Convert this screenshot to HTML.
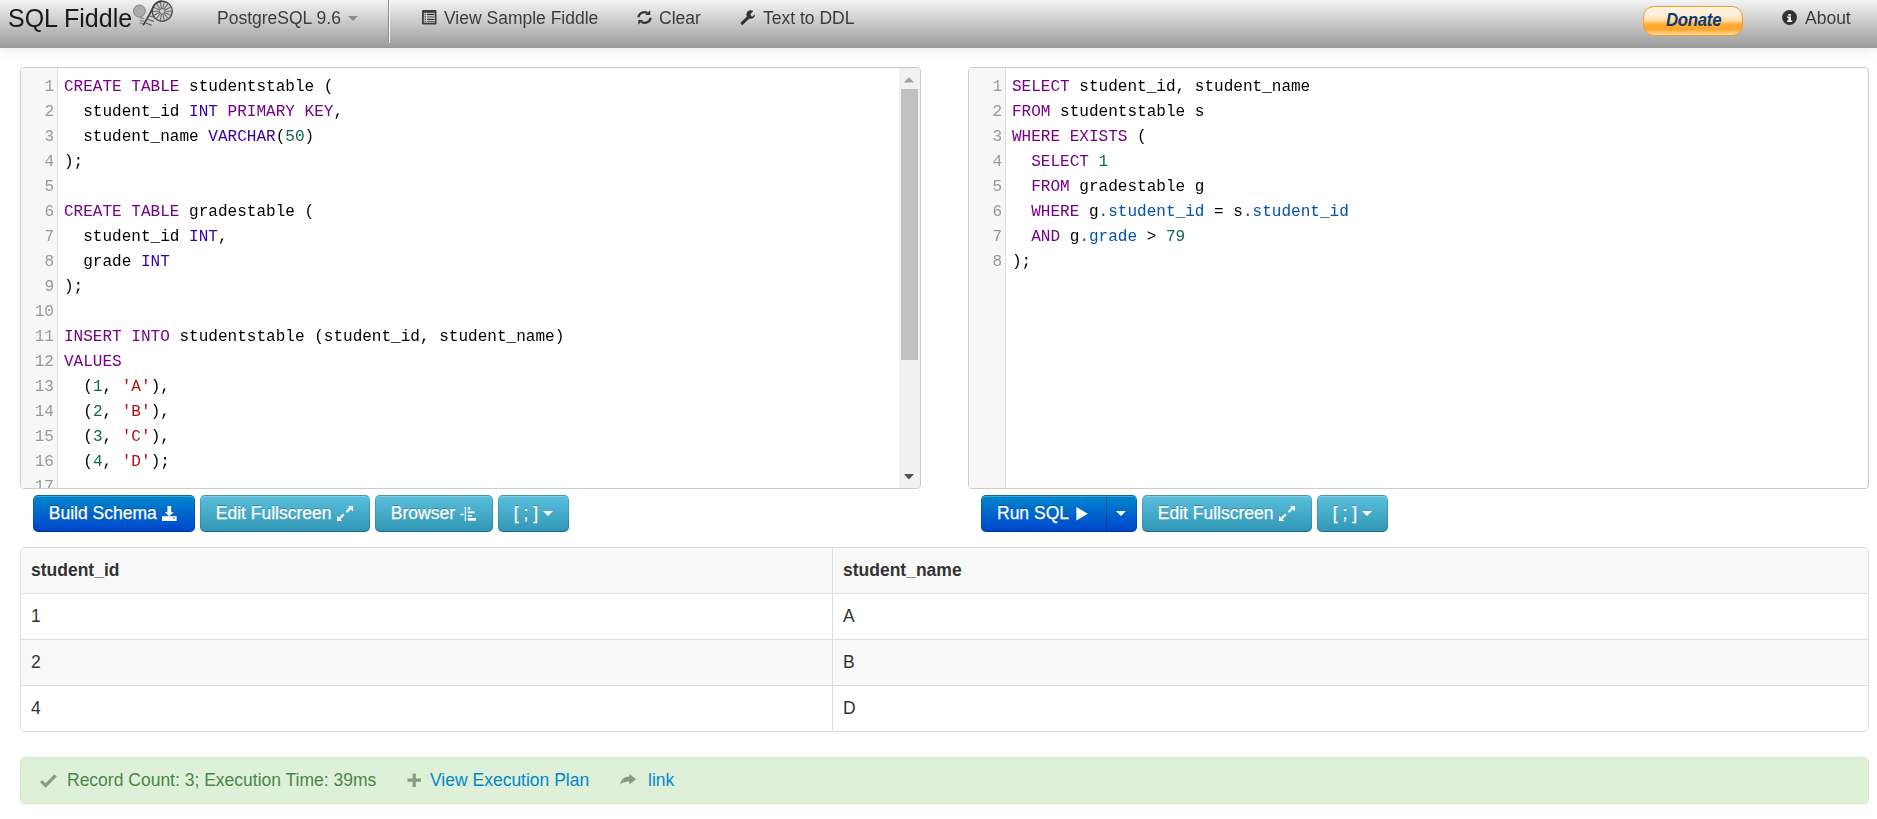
<!DOCTYPE html>
<html><head><meta charset="utf-8">
<style>
*{box-sizing:border-box}
html,body{margin:0;padding:0;width:1877px;height:819px;overflow:hidden;background:#fff;font-family:"Liberation Sans",sans-serif;color:#333}
.abs{position:absolute}
svg{position:absolute;overflow:visible}
#nav{position:absolute;left:0;top:0;width:1877px;height:48px;background:linear-gradient(#f2f2f2 2%,#9b9b9b 98%);box-shadow:0 2px 12px rgba(0,0,0,.09)}
.t{position:absolute;font-size:17.5px;line-height:20px;white-space:nowrap}
.navt{color:#3d3d3d;will-change:transform}
#brand{position:absolute;left:8px;top:3.6px;font-size:25px;line-height:29px;color:#1a1a1a;white-space:nowrap;will-change:transform}
.panel{position:absolute;top:67px;width:901px;height:422px;border:1px solid #ccc;border-radius:4px;background:#fff;overflow:hidden}
.gut{position:absolute;left:0;top:0;width:37px;height:100%;background:#f7f7f7;border-right:1px solid #ddd}
.code{position:absolute;will-change:transform;font-family:"Liberation Mono",monospace;font-size:16.04px;line-height:25px;white-space:pre;color:#000}
.ln{position:absolute;will-change:transform;left:0;width:33px;text-align:right;white-space:pre;font-family:"Liberation Mono",monospace;font-size:16.04px;line-height:25px;color:#999}
.k{color:#708}.b{color:#30a}.n{color:#164}.s{color:#a11}.v{color:#05a}
.btn{position:absolute;top:495px;height:37px;border-radius:5px;border:1px solid rgba(0,0,0,.12);border-bottom-color:rgba(0,0,0,.3);box-shadow:inset 0 1px 0 rgba(255,255,255,.25);background-origin:border-box;border-top-color:rgba(0,0,0,.22)}
.bp{background:linear-gradient(#0088cc,#0044cc) border-box}
.bi{background:linear-gradient(#5bc0de,#2f96b4) border-box}
.bt{color:#fff;text-shadow:0 -1px 0 rgba(0,0,0,.25);-webkit-text-stroke:.25px #fff}
#tbl{position:absolute;left:20px;top:547px;width:1849px;height:185px;border:1px solid #ddd;border-radius:5px;overflow:hidden}
.row{position:absolute;left:0;width:100%;height:47px;border-top:1px solid #ddd}
#alert{position:absolute;left:20px;top:757px;width:1849px;height:47px;background:#dff0d8;border:1px solid #d6e9c6;border-radius:5px}
.gr{color:#468847}.lk{color:#0088cc}
</style></head><body>
<div id="nav">
  <div id="brand">SQL Fiddle</div>
  <!-- fern logo -->
  <svg style="left:128px;top:0" width="50" height="30" viewBox="0 0 50 30">
    <circle cx="11.4" cy="11" r="5.8" fill="#b4b4b4" stroke="#8e8e8e" stroke-width="1.2"/>
    <path d="M12.90 11.00L16.40 11.00M12.61 11.88L15.45 13.94M11.86 12.43L12.95 15.76M10.94 12.43L9.85 15.76M10.19 11.88L7.35 13.94M9.90 11.00L6.40 11.00M10.19 10.12L7.35 8.06M10.94 9.57L9.85 6.24M11.86 9.57L12.95 6.24M12.61 10.12L15.45 8.06" stroke="#999" stroke-width=".8"/>
    <path d="M12 17.5L16 18.6M12 20.2L16 21.2M11.5 22.8L15 23.6" stroke="#8e8e8e" stroke-width="1.4"/>
    <circle cx="34.2" cy="11.2" r="10" fill="#cfcfcf" stroke="#505050" stroke-width="1.4"/>
    <path d="M36.40 11.20L43.50 11.20M36.18 12.15L42.58 15.24M35.57 12.92L40.00 18.47M34.69 13.34L36.27 20.27M33.71 13.34L32.13 20.27M32.83 12.92L28.40 18.47M32.22 12.15L25.82 15.24M32.00 11.20L24.90 11.20M32.22 10.25L25.82 7.16M32.83 9.48L28.40 3.93M33.71 9.06L32.13 2.13M34.69 9.06L36.27 2.13M35.57 9.48L40.00 3.93M36.18 10.25L42.58 7.16" stroke="#6a6a6a" stroke-width="1.1"/>
    <path d="M34.2 1.2A10 10 0 0 0 24.5 8.6C22 14 18 20 15.2 25.3" fill="none" stroke="#3e3e3e" stroke-width="1.7"/>
    <path d="M20.5 15.5L27 17.6M19.3 19.2L25.8 21.4M17.8 22.8L23.6 25.4" stroke="#666" stroke-width="1.3"/>
  </svg>
  <div class="t navt" style="left:217px;top:8px">PostgreSQL 9.6</div>
  <svg style="left:348px;top:16px" width="10" height="5"><path d="M0 0H10L5 5Z" fill="#8f8f8f"/></svg>
  <div class="abs" style="left:388px;top:0;width:1px;height:43px;background:#8a8a8a"></div>
  <div class="abs" style="left:389px;top:0;width:1px;height:43px;background:#fff"></div>
  <!-- list-alt icon -->
  <svg style="left:422px;top:10px" width="15" height="15" viewBox="0 0 15 15">
    <rect x="0" y="0" width="14.5" height="14.6" rx="1" fill="#3a3a3a"/>
    <rect x="1.8" y="2.8" width="10.9" height="10" fill="#d4d4d4"/>
    <g fill="#333">
      <rect x="2.6" y="3.8" width="1.3" height="1.3"/><rect x="5" y="3.8" width="7" height="1.3"/>
      <rect x="2.6" y="6.3" width="1.3" height="1.3"/><rect x="5" y="6.3" width="7" height="1.3" fill="#666"/>
      <rect x="2.6" y="8.8" width="1.3" height="1.3"/><rect x="5" y="8.8" width="7" height="1.3"/>
      <rect x="2.6" y="11" width="1.3" height="1.3"/><rect x="5" y="11" width="7" height="1.3" fill="#666"/>
    </g>
  </svg>
  <div class="t navt" style="left:444px;top:8px">View Sample Fiddle</div>
  <!-- refresh -->
  <svg style="left:637px;top:10px" width="15" height="15" viewBox="0 0 15 15">
    <g fill="none" stroke="#333" stroke-width="2.2">
      <path d="M1.3 7.2A6 6 0 0 1 10.5 3.2"/>
      <path d="M13.7 7.8A6 6 0 0 1 4.5 11.8"/>
    </g>
    <path d="M13.2 0.2V4.9H8.4Z" fill="#333"/>
    <path d="M1.3 14.8V10.1H6.1Z" fill="#333"/>
  </svg>
  <div class="t navt" style="left:659px;top:8px">Clear</div>
  <!-- wrench -->
  <svg style="left:740px;top:10px" width="16" height="16" viewBox="0 0 16 16">
    <defs><mask id="wm"><rect x="-2" y="-2" width="20" height="20" fill="#fff"/><path d="M10.3 4.6L14.5-0.4L17 2.6L12 6.8Z" fill="#000"/></mask></defs>
    <g mask="url(#wm)" fill="#333">
      <circle cx="10.7" cy="4.5" r="4.3"/>
    </g>
    <path d="M2.3 13.2L8.8 6.8" stroke="#333" stroke-width="3.2" stroke-linecap="round"/>
  </svg>
  <div class="t navt" style="left:763px;top:8px">Text to DDL</div>
  <!-- donate -->
  <div class="abs" style="left:1643px;top:6px;width:100px;height:30px;border:1.5px solid #f59a32;border-radius:11px;background:linear-gradient(#fff4e0 0%,#fff0d6 30%,#ffdca2 48%,#ffad38 62%,#ffa62a 80%,#ffdca6 100%)"></div>
  <div class="t" style="left:1666px;top:10px;font-size:17.5px;font-weight:bold;font-style:italic;color:#0e3a73;transform:scaleX(.96);transform-origin:0 0;letter-spacing:-.3px">Donate</div>
  <!-- info -->
  <svg style="left:1782px;top:10px" width="15" height="15" viewBox="0 0 15 15">
    <circle cx="7.5" cy="7.5" r="7.4" fill="#333"/>
    <rect x="6.3" y="4" width="2.6" height="1.7" fill="#fff"/>
    <path d="M5.2 6.6H8.9V10.6H10.2V12H5.2V10.6H6.4V7.9H5.2Z" fill="#fff"/>
  </svg>
  <div class="t navt" style="left:1804.7px;top:8px">About</div>
</div>

<div class="panel" style="left:20px">
  <div class="gut"></div>
  <div class="ln" style="top:7px">1
2
3
4
5
6
7
8
9
10
11
12
13
14
15
16
17</div>
  <div class="code" style="left:43px;top:7px"><span class="k">CREATE</span> <span class="k">TABLE</span> studentstable (
  student_id <span class="b">INT</span> <span class="k">PRIMARY</span> <span class="k">KEY</span>,
  student_name <span class="b">VARCHAR</span>(<span class="n">50</span>)
);

<span class="k">CREATE</span> <span class="k">TABLE</span> gradestable (
  student_id <span class="b">INT</span>,
  grade <span class="b">INT</span>
);

<span class="k">INSERT</span> <span class="k">INTO</span> studentstable (student_id, student_name)
<span class="k">VALUES</span>
  (<span class="n">1</span>, <span class="s">'A'</span>),
  (<span class="n">2</span>, <span class="s">'B'</span>),
  (<span class="n">3</span>, <span class="s">'C'</span>),
  (<span class="n">4</span>, <span class="s">'D'</span>);</div>
  <!-- scrollbar -->
  <div class="abs" style="left:878px;top:0;width:21px;height:420px;background:#f1f1f1"></div>
  <svg style="left:883px;top:9px" width="11" height="6"><path d="M0 5.5H10L5 0Z" fill="#a3a3a3"/></svg>
  <div class="abs" style="left:880px;top:21px;width:17px;height:271px;background:#c1c1c1"></div>
  <svg style="left:883px;top:406px" width="11" height="6"><path d="M0 0H10L5 5.5Z" fill="#505050"/></svg>
</div>
<div class="panel" style="left:968px">
  <div class="gut"></div>
  <div class="ln" style="top:7px">1
2
3
4
5
6
7
8</div>
  <div class="code" style="left:43px;top:7px"><span class="k">SELECT</span> student_id, student_name
<span class="k">FROM</span> studentstable s
<span class="k">WHERE</span> <span class="k">EXISTS</span> (
  <span class="k">SELECT</span> <span class="n">1</span>
  <span class="k">FROM</span> gradestable g
  <span class="k">WHERE</span> g<span class="v">.student_id</span> = s<span class="v">.student_id</span>
  <span class="k">AND</span> g<span class="v">.grade</span> &gt; <span class="n">79</span>
);</div>
</div>

<!-- left buttons -->
<div class="btn bp" style="left:33px;width:162px"></div>
<div class="t bt" style="left:48.8px;top:503px">Build Schema</div>
<svg style="left:162px;top:506px" width="15" height="15" viewBox="0 0 15 15">
  <path d="M5.4 0H9.2V6.3H11.8L7.3 10.3L2.8 6.3H5.4Z" fill="#fff"/>
  <rect x="0" y="10.2" width="14.6" height="4.8" fill="#fff"/>
  <rect x="10.8" y="11.6" width="2" height="1.1" fill="#3a6fd0"/>
</svg>
<div class="btn bi" style="left:200px;width:170px"></div>
<div class="t bt" style="left:215.8px;top:503px">Edit Fullscreen</div>
<svg style="left:337px;top:506px" width="16" height="15" viewBox="0 0 16 15">
  <path d="M10.8 0H16V5.2Z" fill="#fff"/>
  <path d="M9.4 6L13.2 2.4" stroke="#fff" stroke-width="2.2"/>
  <path d="M0 9.8V15H5.2Z" fill="#fff"/>
  <path d="M2.8 12.2L6.8 8.4" stroke="#fff" stroke-width="2.2"/>
</svg>
<div class="btn bi" style="left:375px;width:118px"></div>
<div class="t bt" style="left:390.8px;top:503px">Browser</div>
<svg style="left:460px;top:507px" width="16" height="14" viewBox="0 0 16 14">
  <g fill="#fff">
    <path d="M0 7.4L2.2 5.9V8.9Z"/><rect x="2" y="6.9" width="2.2" height="1"/>
    <rect x="4.8" y="0" width="1.2" height="14"/>
    <rect x="7.8" y="0.4" width="2.4" height="2.4"/>
    <rect x="7.7" y="4.4" width="6.8" height="1.8"/>
    <rect x="7.7" y="8" width="4.3" height="1.6"/>
    <rect x="7.7" y="11" width="8.3" height="2.7"/>
  </g>
</svg>
<div class="btn bi" style="left:498px;width:71px"></div>
<div class="t bt" style="left:513.8px;top:503px">[ ; ]</div>
<svg style="left:543px;top:511px" width="10" height="5"><path d="M0 0H10L5 5Z" fill="#fff"/></svg>

<!-- right buttons -->
<div class="btn bp" style="left:981px;width:156px"></div>
<div class="abs" style="left:1106px;top:496px;width:1px;height:35px;background:rgba(0,0,0,.18)"></div>
<div class="t bt" style="left:997px;top:503px">Run SQL</div>
<svg style="left:1076px;top:507px" width="12" height="14"><path d="M0.4 0V13.6L11.8 6.8Z" fill="#fff"/></svg>
<svg style="left:1116px;top:511px" width="10" height="5"><path d="M0 0H10L5 5Z" fill="#fff"/></svg>
<div class="btn bi" style="left:1142px;width:170px"></div>
<div class="t bt" style="left:1157.8px;top:503px">Edit Fullscreen</div>
<svg style="left:1279px;top:506px" width="16" height="15" viewBox="0 0 16 15">
  <path d="M10.8 0H16V5.2Z" fill="#fff"/>
  <path d="M9.4 6L13.2 2.4" stroke="#fff" stroke-width="2.2"/>
  <path d="M0 9.8V15H5.2Z" fill="#fff"/>
  <path d="M2.8 12.2L6.8 8.4" stroke="#fff" stroke-width="2.2"/>
</svg>
<div class="btn bi" style="left:1317px;width:71px"></div>
<div class="t bt" style="left:1332.8px;top:503px">[ ; ]</div>
<svg style="left:1362px;top:511px" width="10" height="5"><path d="M0 0H10L5 5Z" fill="#fff"/></svg>

<div id="tbl">
  <div class="row" style="top:-1px;background:#f9f9f9"></div>
  <div class="row" style="top:45px"></div>
  <div class="row" style="top:91px;background:#f9f9f9"></div>
  <div class="row" style="top:137px"></div>
  <div class="abs" style="left:811px;top:0;width:1px;height:185px;background:#ddd"></div>
</div>
<div class="t" style="left:31px;top:560px;font-weight:bold">student_id</div>
<div class="t" style="left:843px;top:560px;font-weight:bold">student_name</div>
<div class="t" style="left:31px;top:606px">1</div>
<div class="t" style="left:843px;top:606px">A</div>
<div class="t" style="left:31px;top:652px">2</div>
<div class="t" style="left:843px;top:652px">B</div>
<div class="t" style="left:31px;top:698px">4</div>
<div class="t" style="left:843px;top:698px">D</div>

<div id="alert"></div>
<svg style="left:40px;top:772px" width="17" height="15" viewBox="0 0 17 15">
  <path d="M1.2 9.2L5.6 13.6L15.6 3.4" fill="none" stroke="#879a87" stroke-width="3.2"/>
</svg>
<div class="t gr" style="left:67px;top:770px">Record Count: 3; Execution Time: 39ms</div>
<svg style="left:407px;top:773px" width="15" height="15" viewBox="0 0 15 15">
  <path d="M5.6 0.6H8.8V5.6H14V8.8H8.8V14H5.6V8.8H0.4V5.6H5.6Z" fill="#879a87"/>
</svg>
<div class="t lk" style="left:430px;top:770px">View Execution Plan</div>
<svg style="left:620px;top:774px" width="17" height="11" viewBox="0 0 17 11">
  <path d="M0.2 10.8C0.8 5.6 4.2 2.6 9.4 2.6V0L16.2 5.2L9.4 10.4V7.6C5.6 7.6 2.6 8.2 0.2 10.8Z" fill="#879a87"/>
</svg>
<div class="t lk" style="left:648px;top:770px">link</div>
</body></html>
